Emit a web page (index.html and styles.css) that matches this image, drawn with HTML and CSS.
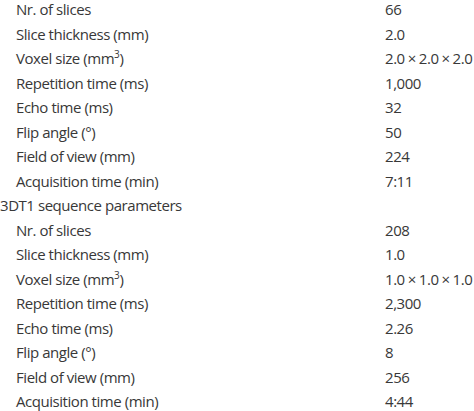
FILE: index.html
```html
<!DOCTYPE html>
<html>
<head>
<meta charset="utf-8">
<link rel="stylesheet" href="styles.css">
</head>
<body>
<div class="table">
  <div class="row sub"><span class="label">Nr. of slices</span><span class="val">66</span></div>
  <div class="row sub"><span class="label">Slice thickness (mm)</span><span class="val">2.0</span></div>
  <div class="row sub"><span class="label">Voxel size (mm<sup>3</sup>)</span><span class="val dims">2.0 × 2.0 × 2.0</span></div>
  <div class="row sub"><span class="label">Repetition time (ms)</span><span class="val">1,000</span></div>
  <div class="row sub"><span class="label">Echo time (ms)</span><span class="val">32</span></div>
  <div class="row sub"><span class="label">Flip angle (°)</span><span class="val">50</span></div>
  <div class="row sub"><span class="label">Field of view (mm)</span><span class="val">224</span></div>
  <div class="row sub"><span class="label">Acquisition time (min)</span><span class="val">7:11</span></div>
  <div class="row head"><span class="label">3DT1 sequence parameters</span><span class="val"></span></div>
  <div class="row sub"><span class="label">Nr. of slices</span><span class="val">208</span></div>
  <div class="row sub"><span class="label">Slice thickness (mm)</span><span class="val">1.0</span></div>
  <div class="row sub"><span class="label">Voxel size (mm<sup>3</sup>)</span><span class="val dims">1.0 × 1.0 × 1.0</span></div>
  <div class="row sub"><span class="label">Repetition time (ms)</span><span class="val">2,300</span></div>
  <div class="row sub"><span class="label">Echo time (ms)</span><span class="val">2.26</span></div>
  <div class="row sub"><span class="label">Flip angle (°)</span><span class="val">8</span></div>
  <div class="row sub"><span class="label">Field of view (mm)</span><span class="val">256</span></div>
  <div class="row sub"><span class="label">Acquisition time (min)</span><span class="val">4:44</span></div>
</div>
</body>
</html>
```
FILE: styles.css
```css
html, body {
  margin: 0;
  padding: 0;
  background: #fff;
}
body {
  font-family: "Open Sans", "Noto Sans", sans-serif;
  font-size: 15px;
  letter-spacing: -0.45px;
  color: #383838;
  overflow: hidden;
}
.table {
  margin-top: -3px;
  display: flex;
  flex-direction: column;
}
.row {
  display: grid;
  grid-template-columns: 385px 1fr;
  height: 24.5px;
  line-height: 24.5px;
  white-space: nowrap;
}
.sub .label {
  padding-left: 16px;
}
.dims {
  word-spacing: -0.5px;
}
sup {
  font-size: 10px;
  line-height: 0;
  vertical-align: 6px;
}
```
